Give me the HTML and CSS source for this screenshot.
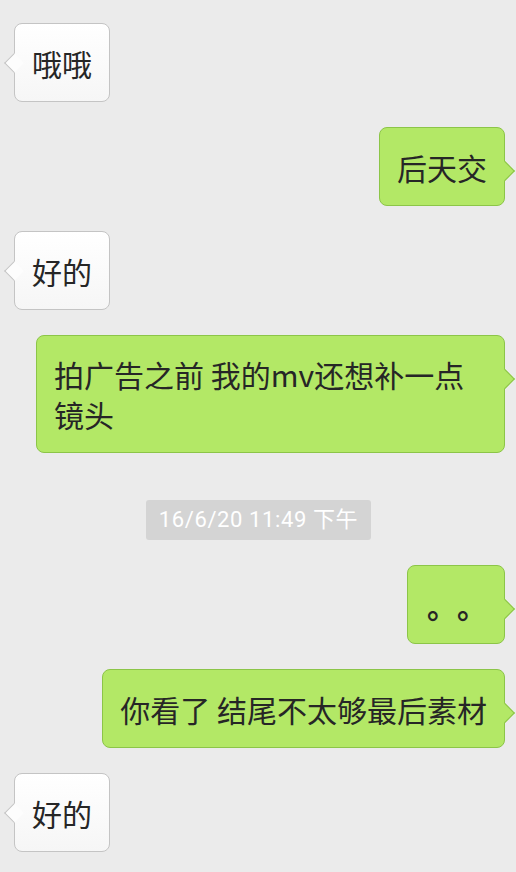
FILE: index.html
```html
<!DOCTYPE html>
<html lang="zh-CN">
<head>
    <meta charset="UTF-8">
    <meta name="viewport" content="width=device-width, initial-scale=1.0">
    <title>聊天</title>
    <link rel="stylesheet" href="styles.css">
</head>
<body>
    <div class="chat">
        <div class="msg left"><div class="bubble">哦哦</div></div>
        <div class="msg right"><div class="bubble">后天交</div></div>
        <div class="msg left"><div class="bubble">好的</div></div>
        <div class="msg right"><div class="bubble">拍广告之前 我的mv还想补一点镜头</div></div>
        <div class="time"><span>16/6/20 11:49 下午</span></div>
        <div class="msg right"><div class="bubble dots">。。</div></div>
        <div class="msg right"><div class="bubble">你看了 结尾不太够最后素材</div></div>
        <div class="msg left"><div class="bubble">好的</div></div>
    </div>
</body>
</html>
```

FILE: styles.css
```css
body {
    margin: 0;
    background-color: #ebebeb;
    font-family: "Noto Sans CJK SC", sans-serif;
}
.chat {
    display: flex;
    flex-direction: column;
    gap: 25px;
    padding: 23px 11px 0 14px;
}
.msg {
    display: flex;
}
.msg.right {
    justify-content: flex-end;
}
.bubble {
    position: relative;
    box-sizing: border-box;
    max-width: 469px;
    min-height: 79px;
    padding: 18px 17px;
    font-size: 30px;
    line-height: 40px;
    color: #262626;
    border: 1px solid #c4c4c4;
    border-radius: 8px;
    display: flex;
    align-items: center;
    text-spacing-trim: space-all;
}
.left .bubble {
    background: linear-gradient(#ffffff, #f6f6f6);
}
.right .bubble {
    background-color: #b3e866;
    border-color: #8cc548;
}
/* хвостик пузыря */
.bubble::before {
    content: "";
    position: absolute;
    width: 13px;
    height: 13px;
    transform: rotate(45deg);
}
.left .bubble::before {
    left: -8px;
    top: 32px;
    background-color: #fdfdfd;
    border-left: 1px solid #c4c4c4;
    border-bottom: 1px solid #c4c4c4;
}
.right .bubble::before {
    right: -8px;
    top: 36px;
    background-color: #b3e866;
    border-right: 1px solid #8cc548;
    border-top: 1px solid #8cc548;
}
.bubble.dots {
    font-weight: bold;
    padding-left: 19px;
}
.time {
    display: flex;
    justify-content: center;
    margin: 22px 0 0 -2px;
}
.time span {
    background-color: #d4d4d4;
    color: #ffffff;
    font-family: Roboto, "Noto Sans CJK SC", sans-serif;
    font-size: 22px;
    letter-spacing: 0.6px;
    line-height: 40px;
    padding: 0 13px;
    border-radius: 3px;
}
```
